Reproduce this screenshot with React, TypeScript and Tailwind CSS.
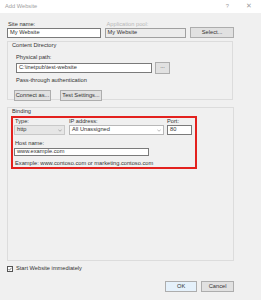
import React from "react";

const btn =
  "h-[11px] border border-[#adadad] bg-[#e1e1e1] flex items-center justify-center leading-none whitespace-nowrap";
const input =
  "h-[10px] border border-[#7a7a7a] bg-white flex items-center px-[2px] leading-none whitespace-nowrap";

function Chevron() {
  return (
    <svg width="4" height="3" viewBox="0 0 8 5" className="ml-auto">
      <path d="M0.5 0.5 L4 4 L7.5 0.5" fill="none" stroke="#777" strokeWidth="1" />
    </svg>
  );
}

export default function App() {
  return (
    <div
      className="w-[261px] h-[300px] bg-[#f0f0f0] text-[#333] text-[5.7px] overflow-hidden flex flex-col whitespace-nowrap"
      style={{ fontFamily: '"Liberation Sans", Arial, sans-serif' }}
    >
      {/* title bar */}
      <div className="h-[13px] bg-white flex items-center pl-[5px] pr-[9px] text-[#a0a0a0] leading-none">
        <span>Add Website</span>
        <span className="ml-auto mr-[17px]">?</span>
        <span className="text-[6.5px]">✕</span>
      </div>

      <div className="flex flex-col pl-[7px] pr-[27px]">
        {/* site name row */}
        <div className="flex items-end mt-[8px]">
          <div className="flex flex-col w-[94px]">
            <span className="leading-[7px] pl-[1px]">Site name:</span>
            <div className={input}>My Website</div>
          </div>
          <div className="flex flex-col w-[82px] ml-[4px]">
            <span className="leading-[7px] text-[#b8b8b8] pl-[2px]">Application pool:</span>
            <div className="h-[10px] border border-[#a0a0a0] bg-[#ececec] flex items-center px-[2px] leading-none">
              My Website
            </div>
          </div>
          <div className={btn + " w-[44px] ml-[4px] h-[11px]"}>Select...</div>
        </div>

        {/* content directory */}
        <div className="mt-[3px] border border-[#dcdcdc] h-[59px] flex flex-col pl-[4px] w-[226px]">
          <span className="leading-[7px]">Content Directory</span>
          <span className="leading-[7px] mt-[5px] pl-[4px]">Physical path:</span>
          <div className="flex items-center pl-[4px] mt-[1px]">
            <div className={input + " w-[136px]"}>C:\inetpub\test-website</div>
            <div className={btn + " w-[15px] ml-[3px] h-[12px] pb-[2px]"}>...</div>
          </div>
          <span className="leading-[7px] mt-[3px] pl-[4px]">Pass-through authentication</span>
          <div className="flex items-center pl-[2px] mt-[6px]">
            <div className={btn + " w-[37px] h-[10px]"}>Connect as...</div>
            <div className={btn + " w-[42px] h-[10px] ml-[9px]"}>Test Settings...</div>
          </div>
        </div>

        {/* binding */}
        <div className="mt-[7px] border border-[#dcdcdc] h-[154px] flex flex-col pl-[3px] w-[227px]">
          <span className="leading-[7px] pl-[1px]">Binding</span>
          <div className="mt-[1px] w-[186px] h-[53px] border-2 border-[#e3211e] flex flex-col pl-[1px]">
            <div className="flex">
              <div className="flex flex-col w-[51px]">
                <span className="leading-[7px] pl-[1px]">Type:</span>
                <div className="h-[10px] border border-[#c8c8c8] bg-[#e6e6e6] flex items-center px-[2px] leading-none">
                  http
                  <Chevron />
                </div>
              </div>
              <div className="flex flex-col w-[95px] ml-[4px]">
                <span className="leading-[7px]">IP address:</span>
                <div className={input + " border-[#b8b8b8] pr-[2px]"}>
                  All Unassigned
                  <Chevron />
                </div>
              </div>
              <div className="flex flex-col w-[25px] ml-[3px]">
                <span className="leading-[7px]">Port:</span>
                <div className={input}>80</div>
              </div>
            </div>
            <span className="leading-[7px] mt-[5px] pl-[1px]">Host name:</span>
            <div className={input + " w-[135px] mt-[1px]"}>www.example.com</div>
            <span className="leading-[7px] mt-[4px] pl-[1px]">
              Example: www.contoso.com or marketing.contoso.com
            </span>
          </div>
        </div>

        {/* checkbox */}
        <div className="flex items-center mt-[4px]">
          <div className="w-[6px] h-[6px] border border-[#555] bg-white flex items-center justify-center">
            <svg width="4" height="4" viewBox="0 0 8 8">
              <path d="M1 4 L3 6.5 L7 1.5" fill="none" stroke="#333" strokeWidth="1.2" />
            </svg>
          </div>
          <span className="ml-[3px] leading-[7px]">Start Website immediately</span>
        </div>

        {/* buttons */}
        <div className="flex mt-[9px] pl-[158px]">
          <div className={btn + " w-[42px] border-[#0078d7] bg-[#e5f1fb]"}>OK</div>
          <div className={btn + " w-[43px] ml-[4px]"}>Cancel</div>
        </div>
      </div>
    </div>
  );
}
